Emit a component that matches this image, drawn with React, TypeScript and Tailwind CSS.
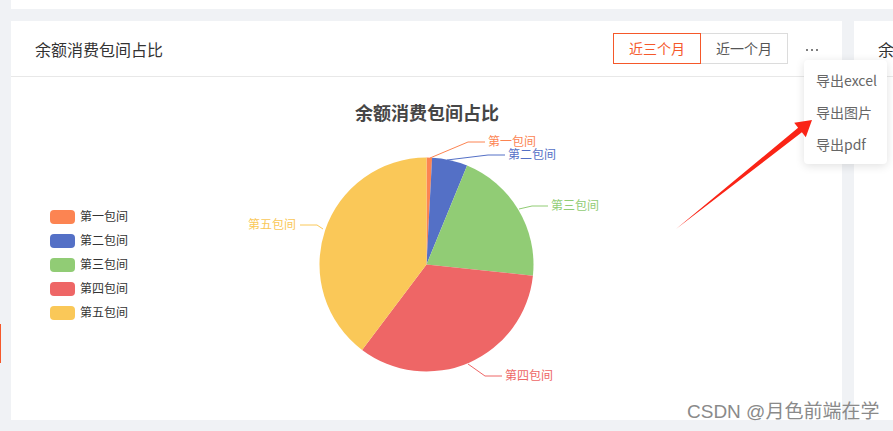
import React from "react";

const FONT = '"Microsoft YaHei", "Noto Sans CJK SC", "Noto Sans", sans-serif';

// pie, in page coordinates
const CX = 426.5;
const CY = 265.5;
const R = 107;

const SLICES = [
  { name: "第一包间", value: 3, color: "#fc8452" },
  { name: "第二包间", value: 19.3, color: "#5470c6" },
  { name: "第三包间", value: 73.7, color: "#91cc75" },
  { name: "第四包间", value: 121, color: "#ee6666" },
  { name: "第五包间", value: 143, color: "#fac858" },
];

// leader lines and label anchors, measured from the chart
const LABELS = [
  { line: "430,159 468,143 485,143", x: 488, y: 143, anchor: "start" },
  { line: "447,161 488,156 505,156", x: 508, y: 156, anchor: "start" },
  { line: "519,210 532,207 548,207", x: 551, y: 207, anchor: "start" },
  { line: "468,365 485,377 502,377", x: 505, y: 377, anchor: "start" },
  { line: "323,230 317,226 300,226", x: 296, y: 226, anchor: "end" },
];

function point(deg: number) {
  const rad = (deg * Math.PI) / 180;
  return [CX + R * Math.sin(rad), CY - R * Math.cos(rad)];
}

function slicePath(from: number, to: number) {
  const [x1, y1] = point(from);
  const [x2, y2] = point(to);
  const large = to - from > 180 ? 1 : 0;
  return `M${CX},${CY} L${x1},${y1} A${R},${R} 0 ${large} 1 ${x2},${y2} Z`;
}

function PieChart() {
  const total = SLICES.reduce((s, d) => s + d.value, 0);
  let acc = 0;
  return (
    <svg
      width={831}
      height={342}
      viewBox="11 78 831 342"
      className="block"
      style={{ fontFamily: FONT }}
    >
      <text
        x={427}
        y={121}
        textAnchor="middle"
        fontSize={18}
        fontWeight={700}
        fill="#464646"
      >
        余额消费包间占比
      </text>

      {SLICES.map((d) => {
        const from = (acc / total) * 360;
        acc += d.value;
        const to = (acc / total) * 360;
        return <path key={d.name} d={slicePath(from, to)} fill={d.color} />;
      })}

      {SLICES.map((d, i) => (
        <g key={d.name}>
          <polyline
            points={LABELS[i].line}
            fill="none"
            stroke={d.color}
            strokeWidth={1}
          />
          <text
            x={LABELS[i].x}
            y={LABELS[i].y + 4}
            textAnchor={LABELS[i].anchor as "start" | "end"}
            fontSize={12}
            fill={d.color}
          >
            {d.name}
          </text>
        </g>
      ))}

      {/* Legend */}
      {SLICES.map((d, i) => (
        <g key={d.name}>
          <rect x={50} y={211 + i * 24} width={25} height={14} rx={4} fill={d.color} />
          <text x={80} y={222 + i * 24} fontSize={12} fill="#333">
            {d.name}
          </text>
        </g>
      ))}
    </svg>
  );
}

export default function App() {
  return (
    <div
      className="relative w-[893px] h-[431px] overflow-hidden bg-[#f0f2f5] pl-[11px]"
      style={{ fontFamily: FONT }}
    >
      <div className="h-[9px] bg-white" />

      <div className="mt-[12px] flex gap-[12px]">
        {/* Main card */}
        <div className="w-[831px] h-[399px] shrink-0 bg-white">
          <div className="flex h-[56px] items-center justify-between border-b border-[#e8e8e8] pl-[24px] pr-[24px]">
            <span className="text-[16px] text-[#333]">余额消费包间占比</span>
            <div className="flex items-center">
              <button className="h-[31px] w-[88px] border border-[#f5582a] text-[14px] text-[#f5582a]">
                近三个月
              </button>
              <button className="h-[31px] w-[87px] border border-l-0 border-[#dcdcdc] text-[14px] text-[#555]">
                近一个月
              </button>
              <span className="ml-[18px] flex gap-[3px] pt-[3px]">
                <span className="h-[2px] w-[2px] rounded-full bg-[#555]" />
                <span className="h-[2px] w-[2px] rounded-full bg-[#555]" />
                <span className="h-[2px] w-[2px] rounded-full bg-[#555]" />
              </span>
            </div>
          </div>
          <PieChart />
        </div>

        {/* Next card, clipped by the window */}
        <div className="h-[399px] flex-1 bg-white">
          <div className="flex h-[56px] items-center border-b border-[#e8e8e8] pl-[24px]">
            <span className="whitespace-nowrap text-[16px] text-[#333]">余额消费包间占比</span>
          </div>
        </div>
      </div>

      {/* Export menu */}
      <div className="absolute left-[804px] top-[60px] w-[83px] rounded-[4px] bg-white py-[4px] shadow-[0_2px_10px_rgba(0,0,0,0.12)]">
        {["导出excel", "导出图片", "导出pdf"].map((t) => (
          <div key={t} className="flex h-[32px] items-center pl-[12px] text-[14px] text-[#666]">
            {t}
          </div>
        ))}
      </div>

      {/* Annotation arrow */}
      <svg className="absolute left-0 top-0" width={893} height={431}>
        <polygon
          points="676,229 801.9,132.3 805.8,137.2 812,120 794.2,122.8 798.1,127.7"
          fill="#fa2416"
        />
      </svg>

      {/* Side marker */}
      <div className="absolute left-0 top-[324px] h-[39px] w-[1px] bg-[#f5582a]" />

      {/* Watermark */}
      <div
        className="absolute left-[687px] top-[400px] whitespace-nowrap text-[19px] leading-[24px] text-[#8a8a8a]"
        style={{ fontFamily: '"Liberation Sans", "Noto Sans CJK SC", sans-serif' }}
      >
        CSDN @月色前端在学
      </div>
    </div>
  );
}
